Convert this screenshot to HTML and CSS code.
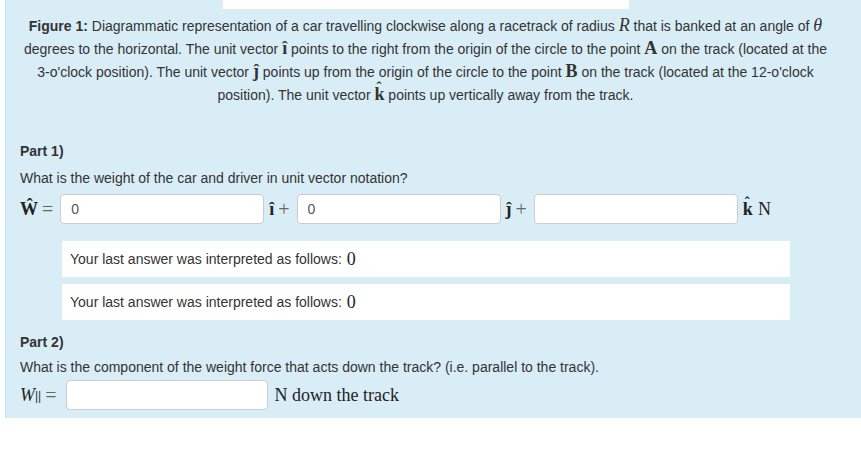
FILE: index.html
```html
<!DOCTYPE html>
<html>
<head>
<meta charset="utf-8">
<link rel="stylesheet" href="styles.css">
</head>
<body>
<div class="panel">
  <div class="figure-img"></div>
  <p class="caption"><b>Figure 1:</b> Diagrammatic representation of a car travelling clockwise along a racetrack of radius <span class="mi">R</span> that is banked at an angle of <span class="mi">θ</span> degrees to the horizontal. The unit vector <span class="mb">î</span> points to the right from the origin of the circle to the point <span class="mb">A</span> on the track (located at the 3-o'clock position). The unit vector <span class="mb">ĵ</span> points up from the origin of the circle to the point <span class="mb">B</span> on the track (located at the 12-o'clock position). The unit vector <span class="mb hat">k</span> points up vertically away from the track.</p>

  <h4 class="part">Part 1)</h4>
  <p class="question">What is the weight of the car and driver in unit vector notation?</p>
  <div class="answer-row">
    <span class="math first"><span class="mb">Ŵ</span><span class="op">=</span></span>
    <input class="field" type="text" value="0">
    <span class="math"><span class="mb">î</span><span class="op">+</span></span>
    <input class="field" type="text" value="0">
    <span class="math"><span class="mb">ĵ</span><span class="op">+</span></span>
    <input class="field" type="text" value="">
    <span class="math"><span class="mb hat">k</span><span class="unit-n">N</span></span>
  </div>
  <div class="feedback">Your last answer was interpreted as follows: <span class="num">0</span></div>
  <div class="feedback">Your last answer was interpreted as follows: <span class="num">0</span></div>

  <h4 class="part part2">Part 2)</h4>
  <p class="question question2">What is the component of the weight force that acts down the track? (i.e. parallel to the track).</p>
  <div class="answer-row row2">
    <span class="math first"><span class="mi">W</span><sub class="sub">||</sub><span class="op">=</span></span>
    <input class="field field2" type="text" value="">
    <span class="math units">N down the track</span>
  </div>
</div>
</body>
</html>
```

FILE: styles.css
```css
html, body {
  margin: 0;
  padding: 0;
  background: #ffffff;
}

body {
  font-family: "Liberation Sans", Arial, sans-serif;
  font-size: 14px;
  color: #333333;
}

.panel {
  margin-left: 5px;
  border-left: 1px solid #bce8f1;
  background: #d9edf7;
  padding: 0 0 8px 14px;
  height: 410px;
  overflow: hidden;
}

.figure-img {
  width: 406px;
  height: 9px;
  background: #ffffff;
  margin-left: 203px;
}

.caption {
  width: 811px;
  margin: 6px 0 0 0;
  line-height: 23px;
  text-align: center;
}

.mi {
  font-family: "Liberation Serif", "DejaVu Serif", serif;
  font-style: italic;
  font-size: 18px;
  line-height: 1;
}

.mb {
  font-family: "Liberation Serif", "DejaVu Serif", serif;
  font-weight: bold;
  font-size: 18px;
  line-height: 1;
}

.hat {
  position: relative;
  display: inline-block;
}

.hat::after {
  content: "\02C6";
  position: absolute;
  left: 2px;
  top: -5px;
  font-weight: bold;
  font-size: 15px;
}

.part {
  margin: 35px 0 0 0;
  font-size: 14px;
  font-weight: bold;
  line-height: 18px;
}

.part2 {
  margin-top: 13px;
}

.question {
  margin: 9px 0 0 0;
  line-height: 18px;
}

.question2 {
  margin-top: 7px;
}

.answer-row {
  display: flex;
  align-items: center;
  margin-top: 7px;
  height: 30px;
}

.math {
  font-family: "Liberation Serif", "DejaVu Serif", serif;
  font-size: 18px;
  color: #222;
  display: flex;
  align-items: center;
  white-space: nowrap;
  margin: 0 5px;
}

.math.first {
  margin-left: 0;
}

.op {
  color: #666;
  font-size: 20px;
  margin: 0 2px 0 4px;
}

.unit-n {
  margin-left: 5px;
}

.field {
  box-sizing: border-box;
  width: 204px;
  height: 30px;
  border: 1px solid #cccccc;
  border-radius: 4px;
  background: #fff;
  padding: 0 10px;
  font-family: "Liberation Sans", Arial, sans-serif;
  font-size: 14px;
  color: #555;
  outline: none;
}

.field2 {
  width: 202px;
}

.feedback {
  margin: 17px 0 0 42px;
  width: 728px;
  height: 36px;
  box-sizing: border-box;
  background: #ffffff;
  padding-left: 8px;
  display: flex;
  align-items: center;
}

.feedback + .feedback {
  margin-top: 7px;
}

.num {
  font-family: "Liberation Serif", "DejaVu Serif", serif;
  font-size: 18px;
  margin-left: 5px;
  color: #222;
}

.sub {
  font-family: "Liberation Sans", Arial, sans-serif;
  font-size: 12px;
  align-self: flex-end;
  margin-bottom: 4px;
  color: #333;
}

.row2 {
  margin-top: 4px;
}

.row2 .math.first {
  margin-right: 7px;
}

.units {
  font-size: 18px;
  margin-left: 7px;
}
```
